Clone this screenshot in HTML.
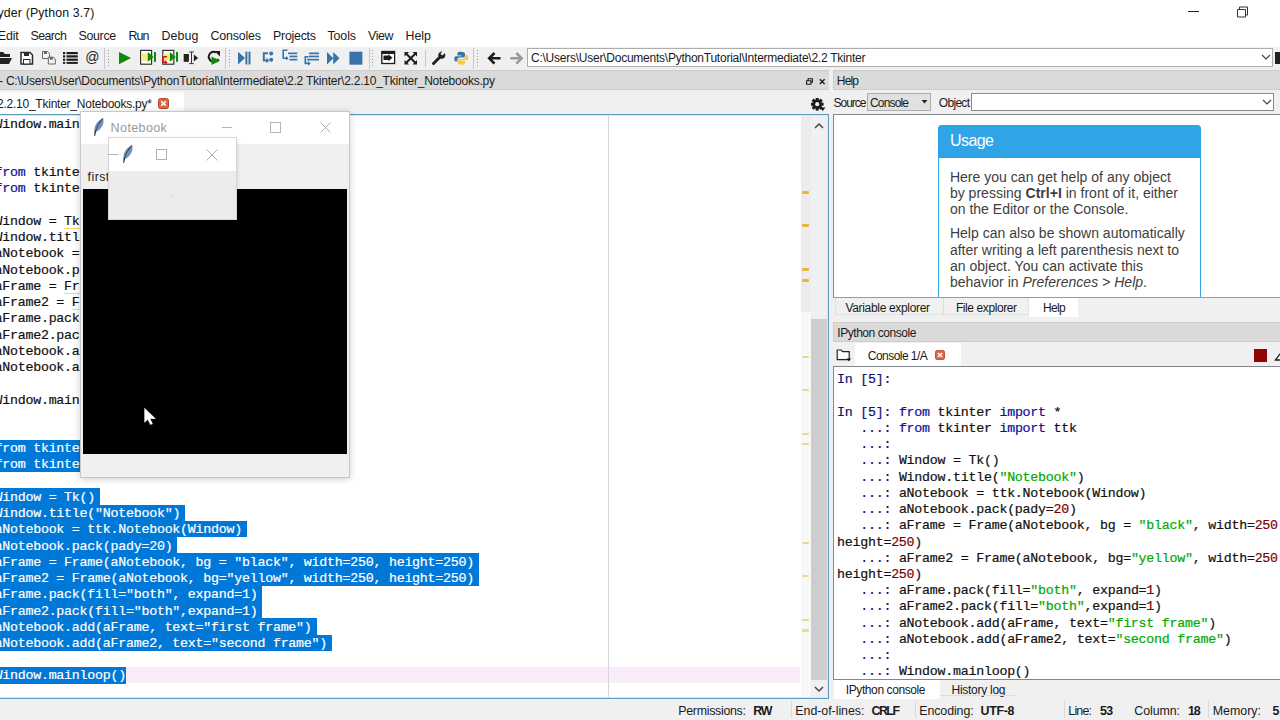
<!DOCTYPE html>
<html lang="en"><head><meta charset="utf-8"><title>Spyder (Python 3.7)</title>
<style>
html,body{margin:0;padding:0;}
body{width:1280px;height:720px;overflow:hidden;background:#f0f0f0;position:relative;font-family:"Liberation Sans", "DejaVu Sans", sans-serif;font-size:12px;color:#1a1a1a;}
.abs{position:absolute;}
.t{position:absolute;white-space:pre;line-height:1;}
.b{font-weight:bold;} .i{font-style:italic;}
.mono{font-family:"Liberation Mono", "DejaVu Sans Mono", monospace;font-size:13.3px;letter-spacing:-0.2463px;color:#111;-webkit-text-stroke:0.2px;}
.cl{position:absolute;height:16.235px;line-height:16.235px;white-space:pre;}
.k{color:#0e0e98;} .s{color:#00aa00;} .n{color:#800000;} .p{color:#12126e;}
.sel{color:#fff;}
.sel .k,.sel .s,.sel .n{color:#fff;}
.selbg{position:absolute;background:#0078d7;height:16.535px;}
.sep{position:absolute;width:1px;background:#d9d9d9;}
</style></head>
<body>
<div class="abs" style="left:0;top:0;width:1280px;height:47px;background:#fff;"></div>
<div class="t" id="title" style="left:-2.50px;top:7.29px;font-size:12.3px;letter-spacing:0.160px;color:#111;">yder (Python 3.7)</div>
<div class="abs" style="left:1188px;top:11px;width:11px;height:1px;background:#222;"></div>
<svg class="abs" style="left:1236px;top:5px;" width="14" height="14" viewBox="0 0 14 14"><path d="M1.5 4.5h8v7.5h-8z M3.5 4.5v-2.5h8v8h-2" fill="none" stroke="#333" stroke-width="1"/></svg>
<div class="t" style="left:-2.20px;top:29.50px;font-size:12.4px;letter-spacing:-0.147px;">Edit</div>
<div class="t" style="left:30.60px;top:29.50px;font-size:12.4px;letter-spacing:-0.602px;">Search</div>
<div class="t" style="left:78.50px;top:29.50px;font-size:12.4px;letter-spacing:-0.312px;">Source</div>
<div class="t" style="left:128.50px;top:29.50px;font-size:12.4px;letter-spacing:-0.927px;">Run</div>
<div class="t" style="left:161.50px;top:29.50px;font-size:12.4px;letter-spacing:0.120px;">Debug</div>
<div class="t" style="left:210.50px;top:29.50px;font-size:12.4px;letter-spacing:-0.173px;">Consoles</div>
<div class="t" style="left:273.00px;top:29.50px;font-size:12.4px;letter-spacing:-0.252px;">Projects</div>
<div class="t" style="left:327.50px;top:29.50px;font-size:12.4px;letter-spacing:-0.114px;">Tools</div>
<div class="t" style="left:368.00px;top:29.50px;font-size:12.4px;letter-spacing:-0.387px;">View</div>
<div class="t" style="left:405.50px;top:29.50px;font-size:12.4px;letter-spacing:0.006px;">Help</div>
<div class="abs" id="toolbar" style="left:0;top:47px;width:1280px;height:24px;background:#f0f0f0;"></div>
<svg class="abs" id="tbicons" style="left:0;top:47px;" width="530" height="24" viewBox="0 47 530 24">
<!-- separators / handles -->
<g stroke="#c8c8c8" stroke-width="1"><path d="M104.5 48v21M225.5 48v21M369.5 48v21M425.5 50v17M473.5 48v21"/></g>
<g stroke="#9a9a9a" stroke-width="1" stroke-dasharray="1 2"><path d="M108.5 50v18M229.5 50v18M372.5 50v18M477.5 50v18"/></g>
<!-- folder open (cut) -->
<path d="M-6 52h9l2 2h5v3h-14z" fill="#222"/><path d="M-8 58h20l-3 6h-18z" fill="#222"/>
<!-- save -->
<path d="M21 52.5h9l2.5 2.5v9h-11.500z" fill="#fff" stroke="#2a2a2a" stroke-width="1.5"/><rect x="24" y="52.500" width="5" height="3.500" fill="#2a2a2a"/><rect x="23.500" y="59.500" width="6.500" height="4.500" fill="#fff" stroke="#2a2a2a" stroke-width="1"/>
<!-- save all -->
<g stroke="#666" stroke-width="1" fill="#f4f4f4"><path d="M42.500 51.500h5l2 2v5h-7z"/><path d="M48.300 57.200h5l2 2v4.800h-7z"/></g>
<g fill="#666"><rect x="44" y="51.500" width="3" height="2.500"/><rect x="49.800" y="57.200" width="3" height="2.500"/></g>
<!-- list -->
<g fill="#1c1c1c"><rect x="63" y="52" width="2.200" height="2.200"/><rect x="66.500" y="52" width="11.300" height="2.200"/><rect x="63" y="55.300" width="2.200" height="2.200"/><rect x="66.500" y="55.300" width="11.300" height="2.200"/><rect x="63" y="58.600" width="2.200" height="2.200"/><rect x="66.500" y="58.600" width="11.300" height="2.200"/><rect x="63" y="61.900" width="2.200" height="2"/><rect x="66.500" y="61.900" width="11.300" height="2"/></g>
<!-- @ -->
<text x="85.300" y="62" font-family="Liberation Sans, sans-serif" font-size="14" fill="#222">@</text>
<!-- run -->
<path d="M119 52l12 6.100l-12 6.100z" fill="#0d8a0d"/>
<!-- run cell -->
<rect x="140.600" y="50.400" width="11" height="13.800" fill="#fff" stroke="#333" stroke-width="1.200"/><rect x="141.200" y="53.500" width="9.800" height="7.300" fill="#f4ee8a"/><path d="M147.800 52l5.900 4.900l-5.900 4.900z" fill="#0d8a0d"/><rect x="154" y="52" width="2" height="9.800" fill="#0d8a0d"/>
<!-- run cell advance -->
<rect x="162.800" y="50.400" width="11" height="13.800" fill="#fff" stroke="#333" stroke-width="1.200"/><rect x="163.400" y="53.500" width="9.800" height="7.300" fill="#f4ee8a"/><path d="M169.900 52l5.900 4.900l-5.900 4.900z" fill="#0d8a0d"/><rect x="176" y="52" width="2" height="9.800" fill="#0d8a0d"/><path d="M167 56.800h-4v5.500h2.500" fill="none" stroke="#e01010" stroke-width="1.600"/><path d="M164.800 60l2.800 2.500l-2.800 2.500z" fill="#e01010"/>
<!-- run selection -->
<rect x="183.700" y="54" width="5.200" height="7.800" fill="#222"/><path d="M189.200 52h4.600M189.200 63.600h4.600M191.500 52v11.600" stroke="#333" stroke-width="1"/><path d="M193.800 54.500l4.400 3.500l-4.400 3.500z" fill="#222"/>
<!-- rerun -->
<path d="M216 52.300a5 5 0 1 0 2.300 6.500" fill="none" stroke="#1c1c1c" stroke-width="2"/><path d="M214.500 51h5.500v5.500z" fill="#1c1c1c"/><path d="M211.500 56.500l8.700 4.200l-8.700 4.200z" fill="#0d8a0d"/>
<!-- debug -->
<g fill="#3775a9"><path d="M238 51.700l7 6.400l-7 6.400z"/><rect x="245.400" y="51.700" width="2" height="12.800"/><rect x="248.500" y="51.700" width="2" height="12.800"/>
<!-- step -->
<path d="M262.800 52.300h5.200v2h-3.200v5.200h1.700v-1.700l2.800 2.700l-2.800 2.700v-1.700h-3.700z"/><circle cx="271.200" cy="53.600" r="2"/><circle cx="271.200" cy="59.700" r="2"/>
<!-- step into -->
<path d="M282.400 49.500h5v1.600h-3.400v6.300h2v-1.500l2.600 2.300l-2.600 2.300v-1.500h-3.600z"/><rect x="288" y="52.500" width="9.300" height="1.700"/><rect x="289.500" y="55.600" width="7.800" height="1.700"/><rect x="289.500" y="58.800" width="7.800" height="1.700"/>
<!-- step return -->
<rect x="309" y="52.500" width="10" height="1.700"/><rect x="309" y="55.600" width="10" height="1.700"/><rect x="307" y="58.800" width="12" height="1.700"/><path d="M304.500 56h4v1.600h-2.400v5h2v-1.600l2.600 2.400l-2.600 2.400v-1.600h-3.600z"/>
<!-- continue -->
<path d="M327 52l6.300 6.200l-6.300 6.200z"/><path d="M333.200 52l6.300 6.200l-6.300 6.200z"/>
<!-- stop -->
<rect x="349.400" y="51.700" width="13" height="13"/></g>
<!-- maximize pane -->
<rect x="381.800" y="51.500" width="12.800" height="12" fill="#fff" stroke="#1c1c1c" stroke-width="1.300"/><rect x="381.800" y="51.500" width="12.800" height="2.500" fill="#1c1c1c"/><path d="M383.500 55.500h5v-1.300l4 3.500l-4 3.500v-1.300h-5z" fill="#1c1c1c"/>
<!-- fullscreen -->
<g stroke="#1c1c1c" stroke-width="2"><path d="M406 53.500l9.500 9.500M415.500 53.500l-9.500 9.500"/></g><g fill="#1c1c1c"><path d="M404.500 52h4.500l-4.500 4.500z"/><path d="M417 52h-4.500l4.500 4.500z"/><path d="M404.500 64.500h4.500l-4.500-4.500z"/><path d="M417 64.500h-4.500l4.500-4.500z"/></g>
<!-- wrench -->
<path d="M433.500 63.500l7.500-7.500" stroke="#222" stroke-width="3" stroke-linecap="round"/><path d="M444.800 53.200a3.600 3.600 0 1 1-2.600-1.600l-1.800 2.500l1.600 1.600z" fill="#222"/>
<!-- python -->
<path d="M460.800 51.700c-3.300 0-3.400 1.500-3.400 2.200v1.700h3.800v.7h-5.200c-1.200 0-1.700 1.200-1.700 2.600s.5 2.600 1.700 2.600h1.400v-1.800c0-1.200 1-2.200 2.200-2.200h3.600c1 0 1.800-.8 1.800-1.800v-2c0-1.300-1.400-2-4.200-2z" fill="#3775a9"/>
<path d="M461.800 64.700c3.300 0 3.400-1.500 3.400-2.200v-1.700h-3.800v-.7h5.200c1.200 0 1.700-1.200 1.700-2.600s-.5-2.600-1.700-2.600h-1.400v1.800c0 1.200-1 2.200-2.200 2.200h-3.600c-1 0-1.800.8-1.800 1.800v2c0 1.300 1.400 2 4.200 2z" fill="#f7cb3f"/>
<!-- back / forward -->
<path d="M500.500 58.300h-10M494.500 53l-5.300 5.300l5.300 5.300" fill="none" stroke="#1c1c1c" stroke-width="2.600"/>
<path d="M510.300 58.300h10M516.300 53l5.300 5.300l-5.300 5.300" fill="none" stroke="#9a9a9a" stroke-width="2.600"/>
</svg>

<div class="abs" style="left:527px;top:48px;width:746px;height:19px;background:#fff;border:1px solid #adadad;box-sizing:border-box;"></div>
<div class="t" style="left:531.00px;top:51.84px;font-size:12px;letter-spacing:-0.242px;">C:\Users\User\Documents\PythonTutorial\Intermediate\2.2 Tkinter</div>
<svg class="abs" style="left:1261px;top:54px;" width="10" height="7" viewBox="0 0 10 7"><path d="M1 1l4 4l4-4" fill="none" stroke="#444" stroke-width="1.2"/></svg>
<div class="abs" style="left:1275px;top:52px;width:5px;height:12px;background:#222;"></div>
<div class="abs" style="left:0;top:70.4px;width:829px;height:20px;background:#dadada;border-top:1px solid #cdcdcd;border-bottom:1px solid #cdcdcd;box-sizing:border-box;"></div>
<div class="t" style="left:-1.00px;top:75.24px;font-size:12px;letter-spacing:-0.227px;">- C:\Users\User\Documents\PythonTutorial\Intermediate\2.2 Tkinter\2.2.10_Tkinter_Notebooks.py</div>
<svg class="abs" style="left:805.5px;top:77.5px;" width="24" height="9" viewBox="0 0 24 9"><path d="M0.6 2.800h4.300v3.400h-4.300z M2.100 2.800v-2h4.300v3.400h-1.500" fill="none" stroke="#1a1a1a" stroke-width="1.100"/><path d="M13.800 1.200l4.800 4.800M18.600 1.200l-4.800 4.800" stroke="#1a1a1a" stroke-width="1.300"/></svg>
<div class="abs" style="left:0;top:92px;width:184px;height:23px;background:#fff;"></div>
<div class="t" style="left:-3.00px;top:97.74px;font-size:12px;letter-spacing:-0.239px;">2.2.10_Tkinter_Notebooks.py*</div>
<svg class="abs" style="left:157.8px;top:97.7px;" width="11" height="11" viewBox="0 0 11 11"><rect x="0.5" y="0.5" width="10" height="10" rx="2" fill="#e0673f" stroke="#b8482a"/><path d="M3.2 3.2l4.6 4.6M7.8 3.2l-4.6 4.6" stroke="#fff" stroke-width="1.5"/></svg>
<svg class="abs" style="left:811px;top:97.500px;" width="15" height="14" viewBox="0 0 15 14"><g fill="#1a1a1a"><rect x="-1.5" y="-6.4" width="3" height="3" transform="translate(6.2 6.2) rotate(0)"/><rect x="-1.5" y="-6.4" width="3" height="3" transform="translate(6.2 6.2) rotate(45)"/><rect x="-1.5" y="-6.4" width="3" height="3" transform="translate(6.2 6.2) rotate(90)"/><rect x="-1.5" y="-6.4" width="3" height="3" transform="translate(6.2 6.2) rotate(135)"/><rect x="-1.5" y="-6.4" width="3" height="3" transform="translate(6.2 6.2) rotate(180)"/><rect x="-1.5" y="-6.4" width="3" height="3" transform="translate(6.2 6.2) rotate(225)"/><rect x="-1.5" y="-6.4" width="3" height="3" transform="translate(6.2 6.2) rotate(270)"/><rect x="-1.5" y="-6.4" width="3" height="3" transform="translate(6.2 6.2) rotate(315)"/><circle cx="6.2" cy="6.2" r="4.7"/><path d="M9 9.500h5.500l-2.750 3.500z"/></g><circle cx="6.2" cy="6.2" r="2.100" fill="#f0f0f0"/></svg>
<div class="abs" id="editor" style="left:0;top:114px;width:829px;height:585px;background:#fff;border-top:1px solid #5a9cc0;border-right:1px solid #5a9cc0;border-bottom:1px solid #5a9cc0;box-sizing:border-box;overflow:hidden;">
<div class="abs" style="left:0;top:552.19px;width:800px;height:16.235px;background:#f7ecf8;"></div>
<div class="abs" style="left:608px;top:0;width:1px;height:584px;background:#d3d7db;"></div>
<div class="cl mono" style="left:-5.5px;top:1.50px;">Window.mainloop()</div>
<div class="cl mono" style="left:-5.5px;top:50.20px;"><span class="k">from</span> tkinter <span class="k">import</span> *</div>
<div class="cl mono" style="left:-5.5px;top:66.44px;"><span class="k">from</span> tkinter <span class="k">import</span> ttk</div>
<div class="cl mono" style="left:-5.5px;top:98.91px;">Window = Tk()</div>
<div class="cl mono" style="left:-5.5px;top:115.14px;">Window.title(<span class="s">"Notebook"</span>)</div>
<div class="cl mono" style="left:-5.5px;top:131.38px;">aNotebook = ttk.Notebook(Window)</div>
<div class="cl mono" style="left:-5.5px;top:147.62px;">aNotebook.pack(pady=<span class="n">20</span>)</div>
<div class="cl mono" style="left:-5.5px;top:163.85px;">aFrame = Frame(aNotebook)</div>
<div class="cl mono" style="left:-5.5px;top:180.08px;">aFrame2 = Frame(aNotebook)</div>
<div class="cl mono" style="left:-5.5px;top:196.32px;">aFrame.pack(fill=<span class="s">"both"</span>, expand=<span class="n">1</span>)</div>
<div class="cl mono" style="left:-5.5px;top:212.56px;">aFrame2.pack(fill=<span class="s">"both"</span>,expand=<span class="n">1</span>)</div>
<div class="cl mono" style="left:-5.5px;top:228.79px;">aNotebook.add(aFrame, text=<span class="s">"first frame"</span>)</div>
<div class="cl mono" style="left:-5.5px;top:245.02px;">aNotebook.add(aFrame2, text=<span class="s">"second frame"</span>)</div>
<div class="cl mono" style="left:-5.5px;top:277.50px;">Window.mainloop()</div>
<div class="selbg" style="left:0;top:324.70px;width:161.94px;"></div>
<div class="selbg" style="left:0;top:340.94px;width:177.41px;"></div>
<div class="selbg" style="left:0;top:373.40px;width:100.06px;"></div>
<div class="selbg" style="left:0;top:389.64px;width:185.14px;"></div>
<div class="selbg" style="left:0;top:405.88px;width:247.02px;"></div>
<div class="selbg" style="left:0;top:422.11px;width:177.41px;"></div>
<div class="selbg" style="left:0;top:438.34px;width:479.07px;"></div>
<div class="selbg" style="left:0;top:454.58px;width:479.07px;"></div>
<div class="selbg" style="left:0;top:470.81px;width:262.49px;"></div>
<div class="selbg" style="left:0;top:487.05px;width:262.49px;"></div>
<div class="selbg" style="left:0;top:503.28px;width:316.63px;"></div>
<div class="selbg" style="left:0;top:519.52px;width:332.11px;"></div>
<div class="selbg" style="left:0;top:551.99px;width:126.00px;"></div>
<div class="cl mono sel" style="left:-5.5px;top:326.20px;"><span class="k">from</span> tkinter <span class="k">import</span> *</div>
<div class="cl mono sel" style="left:-5.5px;top:342.44px;"><span class="k">from</span> tkinter <span class="k">import</span> ttk</div>
<div class="cl mono sel" style="left:-5.5px;top:374.90px;">Window = Tk()</div>
<div class="cl mono sel" style="left:-5.5px;top:391.14px;">Window.title(<span class="s">"Notebook"</span>)</div>
<div class="cl mono sel" style="left:-5.5px;top:407.38px;">aNotebook = ttk.Notebook(Window)</div>
<div class="cl mono sel" style="left:-5.5px;top:423.61px;">aNotebook.pack(pady=<span class="n">20</span>)</div>
<div class="cl mono sel" style="left:-5.5px;top:439.84px;">aFrame = Frame(aNotebook, bg = <span class="s">"black"</span>, width=<span class="n">250</span>, height=<span class="n">250</span>)</div>
<div class="cl mono sel" style="left:-5.5px;top:456.08px;">aFrame2 = Frame(aNotebook, bg=<span class="s">"yellow"</span>, width=<span class="n">250</span>, height=<span class="n">250</span>)</div>
<div class="cl mono sel" style="left:-5.5px;top:472.31px;">aFrame.pack(fill=<span class="s">"both"</span>, expand=<span class="n">1</span>)</div>
<div class="cl mono sel" style="left:-5.5px;top:488.55px;">aFrame2.pack(fill=<span class="s">"both"</span>,expand=<span class="n">1</span>)</div>
<div class="cl mono sel" style="left:-5.5px;top:504.78px;">aNotebook.add(aFrame, text=<span class="s">"first frame"</span>)</div>
<div class="cl mono sel" style="left:-5.5px;top:521.02px;">aNotebook.add(aFrame2, text=<span class="s">"second frame"</span>)</div>
<div class="cl mono sel" style="left:-5.5px;top:553.49px;">Window.mainloop()</div>
<div class="abs" style="left:64.12px;top:112.61px;width:15.47px;height:1px;background:#f3d67a;"></div>
<div class="abs" style="left:64.12px;top:177.55px;width:15.47px;height:1px;background:#f3d67a;"></div>
<div class="abs" style="left:71.85px;top:193.78px;width:7.74px;height:1px;background:#f3d67a;"></div>
<div class="abs" style="left:800.5px;top:0;width:10px;height:197px;background:#ececec;"></div>
<div class="abs" style="left:800.5px;top:197px;width:10px;height:387px;background:#f8f8f8;"></div>
<div class="abs" style="left:811px;top:0;width:17px;height:584px;background:#f0f0f0;"></div>
<div class="abs" style="left:811px;top:204.4px;width:17px;height:360.5px;background:#cdcdcd;"></div>
<div class="abs" style="left:802px;top:75.5px;width:6.5px;height:3px;background:#ecb143;border-radius:1px;"></div>
<div class="abs" style="left:802px;top:108.5px;width:6.5px;height:3px;background:#ecb143;border-radius:1px;"></div>
<div class="abs" style="left:802px;top:153.0px;width:6.5px;height:3px;background:#ecb143;border-radius:1px;"></div>
<div class="abs" style="left:802px;top:164.0px;width:6.5px;height:3px;background:#ecb143;border-radius:1px;"></div>
<div class="abs" style="left:802px;top:240.5px;width:6.5px;height:2.4px;background:#ecd88c;border-radius:1px;"></div>
<div class="abs" style="left:802px;top:273.6px;width:6.5px;height:2.4px;background:#ecd88c;border-radius:1px;"></div>
<div class="abs" style="left:802px;top:317.5px;width:6.5px;height:2.4px;background:#ecd88c;border-radius:1px;"></div>
<div class="abs" style="left:802px;top:328.1px;width:6.5px;height:2.4px;background:#ecd88c;border-radius:1px;"></div>
<div class="abs" style="left:802px;top:426.8px;width:6.5px;height:2.4px;background:#ecd88c;border-radius:1px;"></div>
<div class="abs" style="left:802px;top:460.09999999999997px;width:6.5px;height:2.4px;background:#ecd88c;border-radius:1px;"></div>
<div class="abs" style="left:802px;top:503.8px;width:6.5px;height:2.4px;background:#ecd88c;border-radius:1px;"></div>
<div class="abs" style="left:802px;top:514.3px;width:6.5px;height:2.4px;background:#ecd88c;border-radius:1px;"></div>
<svg class="abs" style="left:814.3px;top:6.7px;" width="10" height="7" viewBox="0 0 10 7"><path d="M1 6l4-4l4 4" fill="none" stroke="#444" stroke-width="1.5"/></svg>
<svg class="abs" style="left:814.3px;top:570.5px;" width="10" height="7" viewBox="0 0 10 7"><path d="M1 1l4 4l4-4" fill="none" stroke="#444" stroke-width="1.5"/></svg>
<div class="abs" style="left:-2px;top:0;width:830px;height:583px;box-shadow:inset 0 0 0 1px #d4ebf8;"></div>
</div>
<!-- Notebook Tk window -->
<div class="abs" id="tkwin" style="left:80px;top:110.500px;width:270px;height:367px;background:#f0f0f0;border:1px solid #c8c8c8;box-sizing:border-box;box-shadow:0 1px 7px rgba(0,0,0,0.20);">
  <div class="abs" style="left:0;top:0;width:268px;height:32px;background:#fff;"></div>
  <svg class="abs" style="left:11px;top:5px;" width="14" height="20" viewBox="0 0 14 20"><path d="M2.500 16.500C1.500 9.500 5 3.500 11 1.200C13 6 9.500 12.500 4 15z" fill="#7391b8"/><path d="M11 1.200C8.500 3 7 5.500 6 8.500C8 6 9.500 4.500 11 1.200z" fill="#4d6a95"/><path d="M11 1.200C7 5 4.500 10 3 16.500" stroke="#2c3e5c" stroke-width="0.900" fill="none"/><path d="M2.600 18.800l1-5" stroke="#333" stroke-width="1.100"/></svg>
  <div class="abs" style="left:141px;top:15px;width:10px;height:1px;background:#b4b4b4;"></div>
  <div class="abs" style="left:189px;top:10px;width:11px;height:11px;border:1px solid #b4b4b4;box-sizing:border-box;"></div>
  <svg class="abs" style="left:239px;top:10px;" width="11" height="11" viewBox="0 0 11 11"><path d="M.500.500l10 10M10.500.500l-10 10" stroke="#adadad" stroke-width="1"/></svg>
  <div class="abs" style="left:1.500px;top:77.500px;width:264.500px;height:264.500px;background:#000;"></div>
</div>
<div class="t" style="left:110.60px;top:121.63px;font-size:12.6px;letter-spacing:0.344px;color:#9a9a9a;">Notebook</div>
<div class="t" style="left:87.60px;top:170.59px;font-size:12.3px;letter-spacing:0.449px;color:#222;">first</div>
<!-- small Tk window -->
<div class="abs" id="tkwin2" style="left:108px;top:137px;width:129px;height:83px;background:#ececec;border:1px solid #d6d6d6;box-sizing:border-box;box-shadow:1px 1px 3px rgba(0,0,0,0.10);">
  <div class="abs" style="left:0;top:0;width:127px;height:33px;background:#fff;"></div>
  <div class="abs" style="left:-1px;top:16px;width:10px;height:1px;background:#b4b4b4;"></div>
  <svg class="abs" style="left:12px;top:6px;" width="14" height="20" viewBox="0 0 14 20"><path d="M2.500 16.500C1.500 9.500 5 3.500 11 1.200C13 6 9.500 12.500 4 15z" fill="#7391b8"/><path d="M11 1.200C8.500 3 7 5.500 6 8.500C8 6 9.500 4.500 11 1.200z" fill="#4d6a95"/><path d="M11 1.200C7 5 4.500 10 3 16.500" stroke="#2c3e5c" stroke-width="0.900" fill="none"/><path d="M2.600 18.800l1-5" stroke="#333" stroke-width="1.100"/></svg>
  <div class="abs" style="left:47px;top:11px;width:11px;height:11px;border:1px solid #b4b4b4;box-sizing:border-box;"></div>
  <svg class="abs" style="left:97px;top:11px;" width="12" height="12" viewBox="0 0 12 12"><path d="M.500.500l11 11M11.500.500l-11 11" stroke="#adadad" stroke-width="1"/></svg>
  <div class="abs" style="left:60px;top:57px;width:5px;height:3px;border:1px solid #dedede;border-radius:2px;box-sizing:border-box;"></div>
</div>
<!-- mouse cursor -->
<svg class="abs" style="left:140px;top:404px;" width="22" height="26" viewBox="140 404 22 26"><path d="M144.200 407.600V423l3.500-3.100l2.500 5.100l2.800-1.100l-2.400-4.900h5.600z" fill="#fff" stroke="#000" stroke-width="0.300"/></svg>

<div class="abs" style="left:833px;top:70.4px;width:447px;height:20px;background:#dadada;border:1px solid #cdcdcd;border-right:none;box-sizing:border-box;"></div>
<div class="t" style="left:836.80px;top:75.24px;font-size:12px;letter-spacing:-0.820px;">Help</div>
<div class="t" style="left:833.50px;top:96.84px;font-size:12px;letter-spacing:-1.008px;">Source</div>
<div class="abs" style="left:867px;top:93px;width:64px;height:18px;background:#e1e1e1;border:1px solid #adadad;box-sizing:border-box;"></div>
<div class="t" style="left:870.00px;top:96.84px;font-size:12px;letter-spacing:-0.840px;">Console</div>
<svg class="abs" style="left:921px;top:100px;" width="7" height="4" viewBox="0 0 7 4"><path d="M0.5 0h6l-3 3.5z" fill="#222"/></svg>
<div class="t" style="left:938.80px;top:96.84px;font-size:12px;letter-spacing:-0.696px;">Object</div>
<div class="abs" style="left:971px;top:93px;width:303px;height:18px;background:#fff;border:1px solid #8a8a8a;box-sizing:border-box;"></div>
<svg class="abs" style="left:1262px;top:99px;" width="10" height="7" viewBox="0 0 10 7"><path d="M1 1l4 4l4-4" fill="none" stroke="#444" stroke-width="1.2"/></svg>
<div class="abs" id="helpbox" style="left:833px;top:114px;width:447px;height:184px;background:#fff;border-left:1px solid #828790;border-top:1px solid #828790;border-bottom:1px solid #9a9a9a;box-sizing:border-box;overflow:hidden;">
<div class="abs" style="left:104px;top:10px;width:263px;height:200px;border:1px solid #2fa4e7;border-radius:4px 4px 0 0;box-sizing:border-box;background:#fff;"></div>
<div class="abs" style="left:104px;top:10px;width:263px;height:33px;background:#2fa4e7;border-radius:4px 4px 0 0;"></div>
<div class="t" style="left:115.90px;top:18.26px;font-size:16px;letter-spacing:-0.535px;color:#fff;">Usage</div>
<div class="t" style="left:115.90px;top:55.10px;font-size:14px;letter-spacing:0.024px;color:#404040;">Here you can get help of any object</div>
<div class="t" style="left:115.90px;top:70.85px;font-size:14px;letter-spacing:0.013px;color:#404040;">by pressing <b>Ctrl+I</b> in front of it, either</div>
<div class="t" style="left:115.90px;top:86.85px;font-size:14px;letter-spacing:0.014px;color:#404040;">on the Editor or the Console.</div>
<div class="t" style="left:115.90px;top:111.35px;font-size:14px;letter-spacing:0.018px;color:#404040;">Help can also be shown automatically</div>
<div class="t" style="left:115.90px;top:127.85px;font-size:14px;letter-spacing:0.009px;color:#404040;">after writing a left parenthesis next to</div>
<div class="t" style="left:115.90px;top:144.05px;font-size:14px;letter-spacing:0.028px;color:#404040;">an object. You can activate this</div>
<div class="t" style="left:115.90px;top:160.15px;font-size:14px;letter-spacing:0.019px;color:#404040;">behavior in <i>Preferences &gt; Help</i>.</div>
</div>
<div class="abs" style="left:835px;top:298px;width:194px;height:17px;border:1px solid #e2e2e2;border-top:none;box-sizing:border-box;"></div>
<div class="abs" style="left:942.5px;top:298px;width:1px;height:17px;background:#dcdcdc;"></div>
<div class="abs" style="left:1029px;top:298px;width:49px;height:18.5px;background:#fff;"></div>
<div class="t" style="left:845.50px;top:302.04px;font-size:12px;letter-spacing:-0.332px;">Variable explorer</div>
<div class="t" style="left:955.90px;top:302.04px;font-size:12px;letter-spacing:-0.408px;">File explorer</div>
<div class="t" style="left:1042.90px;top:302.04px;font-size:12px;letter-spacing:-0.653px;">Help</div>
<div class="abs" style="left:833px;top:321.5px;width:447px;height:20px;background:#dadada;border:1px solid #cdcdcd;border-right:none;box-sizing:border-box;"></div>
<div class="t" style="left:837.30px;top:327.14px;font-size:12px;letter-spacing:-0.456px;">IPython console</div>
<div class="abs" style="left:855px;top:343px;width:106px;height:23px;background:#fff;"></div>
<div class="t" style="left:867.80px;top:349.54px;font-size:12px;letter-spacing:-0.540px;">Console 1/A</div>
<svg class="abs" style="left:935px;top:350px;" width="10" height="10" viewBox="0 0 11 11"><rect x="0.5" y="0.5" width="10" height="10" rx="2" fill="#e0673f" stroke="#b8482a"/><path d="M3.2 3.2l4.6 4.6M7.8 3.2l-4.6 4.6" stroke="#fff" stroke-width="1.5"/></svg>
<svg class="abs" style="left:836px;top:348px;" width="17" height="15" viewBox="0 0 17 15"><path d="M1.200 2h4l1.500 1.700h6.500v8h-12z" fill="#fdfdfd" stroke="#222" stroke-width="1.200"/><path d="M10.500 10.500h4.600l-2.300 2.800z" fill="#111"/></svg>
<div class="abs" style="left:1254px;top:349px;width:13px;height:13px;background:#8f0505;"></div>
<svg class="abs" style="left:1270px;top:349px;" width="10" height="13" viewBox="0 0 10 13"><path d="M5.500 11L13 1v10z" stroke="#222" stroke-width="1.300" fill="#fff"/></svg>
<div class="abs" id="console" style="left:833px;top:366px;width:447px;height:314px;background:#fff;border-left:1px solid #828790;border-top:1px solid #828790;border-bottom:1px solid #828790;box-sizing:border-box;overflow:hidden;">
<div class="abs" style="left:0;top:0;width:444px;height:312px;overflow:hidden;">
<div class="cl mono" style="left:3px;top:5.18px;"><span class="p">In [5]:</span></div>
<div class="cl mono" style="left:3px;top:37.65px;"><span class="p">In [5]: </span><span class="k">from</span> tkinter <span class="k">import</span> *</div>
<div class="cl mono" style="left:3px;top:53.89px;"><span class="p">   ...: </span><span class="k">from</span> tkinter <span class="k">import</span> ttk</div>
<div class="cl mono" style="left:3px;top:70.12px;"><span class="p">   ...:</span></div>
<div class="cl mono" style="left:3px;top:86.36px;"><span class="p">   ...: </span>Window = Tk()</div>
<div class="cl mono" style="left:3px;top:102.59px;"><span class="p">   ...: </span>Window.title(<span class="s">"Notebook"</span>)</div>
<div class="cl mono" style="left:3px;top:118.83px;"><span class="p">   ...: </span>aNotebook = ttk.Notebook(Window)</div>
<div class="cl mono" style="left:3px;top:135.06px;"><span class="p">   ...: </span>aNotebook.pack(pady=<span class="n">20</span>)</div>
<div class="cl mono" style="left:3px;top:151.30px;"><span class="p">   ...: </span>aFrame = Frame(aNotebook, bg = <span class="s">"black"</span>, width=<span class="n">250</span>,</div>
<div class="cl mono" style="left:3px;top:167.53px;">height=<span class="n">250</span>)</div>
<div class="cl mono" style="left:3px;top:183.77px;"><span class="p">   ...: </span>aFrame2 = Frame(aNotebook, bg=<span class="s">"yellow"</span>, width=<span class="n">250</span>,</div>
<div class="cl mono" style="left:3px;top:200.00px;">height=<span class="n">250</span>)</div>
<div class="cl mono" style="left:3px;top:216.24px;"><span class="p">   ...: </span>aFrame.pack(fill=<span class="s">"both"</span>, expand=<span class="n">1</span>)</div>
<div class="cl mono" style="left:3px;top:232.47px;"><span class="p">   ...: </span>aFrame2.pack(fill=<span class="s">"both"</span>,expand=<span class="n">1</span>)</div>
<div class="cl mono" style="left:3px;top:248.71px;"><span class="p">   ...: </span>aNotebook.add(aFrame, text=<span class="s">"first frame"</span>)</div>
<div class="cl mono" style="left:3px;top:264.94px;"><span class="p">   ...: </span>aNotebook.add(aFrame2, text=<span class="s">"second frame"</span>)</div>
<div class="cl mono" style="left:3px;top:281.18px;"><span class="p">   ...:</span></div>
<div class="cl mono" style="left:3px;top:297.41px;"><span class="p">   ...: </span>Window.mainloop()</div>
</div>
</div>
<div class="abs" style="left:834px;top:680px;width:106px;height:18.5px;background:#fff;"></div>
<div class="t" style="left:845.80px;top:684.04px;font-size:12px;letter-spacing:-0.406px;">IPython console</div>
<div class="t" style="left:951.50px;top:684.04px;font-size:12px;letter-spacing:-0.270px;">History log</div>
<div class="abs" style="left:940px;top:695px;width:75px;height:1px;background:#dcdcdc;"></div>
<div class="abs" style="left:0;top:699px;width:1280px;height:21px;background:#f0f0f0;"></div>
<div class="t" style="left:678.30px;top:704.70px;font-size:12.4px;letter-spacing:-0.299px;">Permissions:</div>
<div class="t b" style="left:753.30px;top:704.70px;font-size:12.4px;letter-spacing:-1.260px;">RW</div>
<div class="t" style="left:795.30px;top:704.70px;font-size:12.4px;letter-spacing:-0.035px;">End-of-lines:</div>
<div class="t b" style="left:871.50px;top:704.70px;font-size:12.4px;letter-spacing:-1.515px;">CRLF</div>
<div class="t" style="left:919.30px;top:704.70px;font-size:12.4px;letter-spacing:-0.097px;">Encoding:</div>
<div class="t b" style="left:980.50px;top:704.70px;font-size:12.4px;letter-spacing:-0.288px;">UTF-8</div>
<div class="t" style="left:1068.30px;top:704.70px;font-size:12.4px;letter-spacing:-0.802px;">Line:</div>
<div class="t b" style="left:1100.00px;top:704.70px;font-size:12.4px;letter-spacing:-0.764px;">53</div>
<div class="t" style="left:1134.30px;top:704.70px;font-size:12.4px;letter-spacing:-0.082px;">Column:</div>
<div class="t b" style="left:1188.00px;top:704.70px;font-size:12.4px;letter-spacing:-1.264px;">18</div>
<div class="t" style="left:1212.80px;top:704.70px;font-size:12.4px;letter-spacing:-0.006px;">Memory:</div>
<div class="t b" style="left:1272.50px;top:704.70px;font-size:12.4px;">5</div>
<div class="sep" style="left:791px;top:701px;height:17px;"></div>
<div class="sep" style="left:915px;top:701px;height:17px;"></div>
<div class="sep" style="left:1064px;top:701px;height:17px;"></div>
<div class="sep" style="left:1208px;top:701px;height:17px;"></div>
</body></html>
